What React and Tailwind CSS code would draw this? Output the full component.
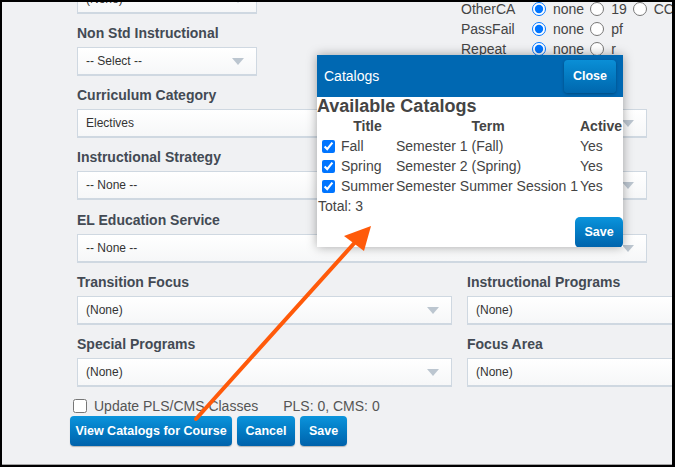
import React from "react";

function Arrow() {
  return (
    <svg width="12" height="7" viewBox="0 0 12 7" className="shrink-0">
      <polygon points="0,0 12,0 6,7" fill="#bcc6d0" />
    </svg>
  );
}

function Select({ value, w, arrow = true }) {
  return (
    <div
      className={`${w} h-[29px] shrink-0 flex items-center justify-between pl-[8px] pr-[12px] border border-[#cfd8e1] border-b-2 bg-gradient-to-b from-white to-[#f6f7f8] text-[12px] text-[#333]`}
    >
      <span>{value}</span>
      {arrow && <Arrow />}
    </div>
  );
}

function Label({ children, extra = "" }) {
  return (
    <div className={`mt-[9px] mb-[4px] h-[20px] flex items-center text-[14px] font-bold text-[#434a54] whitespace-nowrap ${extra}`}>
      {children}
    </div>
  );
}

function Radio({ checked }) {
  return (
    <input
      type="radio"
      readOnly
      checked={checked}
      className="w-[14px] h-[14px] m-0 block accent-[#0075ff]"
    />
  );
}

function BlueBtn({ children, cls }) {
  return (
    <div
      className={`${cls} h-[30px] flex items-center justify-center rounded-[4px] bg-gradient-to-b from-[#0b94dc] to-[#0062ab] text-white text-[12.5px] font-bold shadow-[0_1px_1px_rgba(0,0,0,0.25)]`}
    >
      {children}
    </div>
  );
}

export default function App() {
  const rows = [
    ["Fall", "Semester 1 (Fall)"],
    ["Spring", "Semester 2 (Spring)"],
    ["Summer", "Semester Summer Session 1"],
  ];
  return (
    <div
      className="relative w-[675px] h-[467px] overflow-hidden bg-black"
      style={{ fontFamily: '"Liberation Sans", Arial, sans-serif' }}
    >
      <div className="absolute left-[2px] top-[2px] right-[3px] bottom-[2px] bg-[#f0f1f3] border-b border-[#a3a3a3] overflow-hidden">
        <div className="pl-[75px]">
          {/* top section */}
          <div className="flex items-start">
            <div className="flex flex-col -mt-[17px]">
              <Select value="(None)" w="w-[180px]" />
              <Label>Non Std Instructional</Label>
              <Select value="-- Select --" w="w-[180px]" />
            </div>
            <div className="ml-[204px] -mt-[3px] flex flex-col text-[14px] text-[#444]">
              {[
                ["OtherCA", ["none", "19", "CC"]],
                ["PassFail", ["none", "pf"]],
                ["Repeat", ["none", "r"]],
              ].map(([name, opts]) => (
                <div key={name} className="h-[20px] flex items-center whitespace-nowrap">
                  <span className="w-[71px]">{name}</span>
                  {opts.map((o, i) => (
                    <span key={o} className="flex items-center">
                      <span className={i === 0 ? "" : "ml-[6px]"}>
                        <Radio checked={i === 0} />
                      </span>
                      <span className="ml-[7px]">{o}</span>
                    </span>
                  ))}
                </div>
              ))}
            </div>
          </div>

          <Label>Curriculum Category</Label>
          <Select value="Electives" w="w-[570px]" />
          <Label>Instructional Strategy</Label>
          <Select value="-- None --" w="w-[570px]" />
          <Label extra="!mt-[10px]">EL Education Service</Label>
          <Select value="-- None --" w="w-[570px]" />

          <div className="flex gap-[15px]">
            <div className="flex flex-col">
              <Label>Transition Focus</Label>
              <Select value="(None)" w="w-[375px]" />
              <Label>Special Programs</Label>
              <Select value="(None)" w="w-[375px]" />
            </div>
            <div className="flex flex-col">
              <Label>Instructional Programs</Label>
              <Select value="(None)" w="w-[375px]" arrow={false} />
              <Label>Focus Area</Label>
              <Select value="(None)" w="w-[375px]" arrow={false} />
            </div>
          </div>

          <div className="mt-[9px] h-[20px] flex items-center text-[14px] text-[#555] -ml-[4px]">
            <input type="checkbox" readOnly className="w-[14px] h-[14px] m-0" />
            <span className="ml-[7px]">Update PLS/CMS Classes</span>
            <span className="ml-[25px]">PLS: 0, CMS: 0</span>
          </div>
          <div className="flex gap-[5px] -ml-[7px]">
            <BlueBtn cls="w-[162px]">View Catalogs for Course</BlueBtn>
            <BlueBtn cls="w-[58px]">Cancel</BlueBtn>
            <BlueBtn cls="w-[47px]">Save</BlueBtn>
          </div>
        </div>
      </div>

      {/* Modal */}
      <div className="absolute left-[317px] top-[55px] w-[306px] h-[192px] overflow-hidden bg-white shadow-[0_0_10px_rgba(0,0,0,0.35)] flex flex-col">
        <div className="h-[42px] shrink-0 bg-[#0068b2] flex items-center justify-between pl-[7px] pr-[7px]">
          <span className="text-white text-[14px]">Catalogs</span>
          <div className="w-[52px] h-[33px] rounded-[4px] bg-gradient-to-b from-[#0b8fd6] to-[#0067ae] shadow-[0_1px_3px_rgba(0,0,0,0.3)] flex items-center justify-center text-white text-[12.5px] font-bold">
            Close
          </div>
        </div>
        <div className="shrink-0 h-[19px] text-[18px] font-bold text-[#444] leading-[19px] whitespace-nowrap">Available Catalogs</div>
        <div className="shrink-0 text-[14px] text-[#444] leading-[20px]">
          <div className="h-[20px] flex font-bold">
            <div className="w-[22px]"></div>
            <div className="w-[57px] text-center">Title</div>
            <div className="w-[184px] text-center">Term</div>
            <div>Active</div>
          </div>
          {rows.map(([t, term]) => (
            <div key={t} className="h-[20px] flex items-center whitespace-nowrap">
              <div className="w-[22px] pl-[5px]">
                <input type="checkbox" checked readOnly className="w-[13px] h-[13px] m-0 block accent-[#0075ff]" />
              </div>
              <div className="w-[57px] pl-[2px]">{t}</div>
              <div className="w-[184px]">{term}</div>
              <div>Yes</div>
            </div>
          ))}
        </div>
        <div className="shrink-0 h-[20px] text-[14px] text-[#444] leading-[20px] pl-[1px]">Total: 3</div>
        <div className="shrink-0 flex justify-end mt-[1px]">
          <div className="w-[48px] h-[31px] rounded-[5px] bg-gradient-to-b from-[#0b94dc] to-[#0062ab] flex items-center justify-center text-white text-[12.5px] font-bold">
            Save
          </div>
        </div>
      </div>

      {/* Orange arrow */}
      <svg className="absolute left-0 top-0 pointer-events-none" width="675" height="467">
        <line x1="196" y1="419" x2="358" y2="239" stroke="#ff5a0a" strokeWidth="4" strokeLinecap="round" />
        <polygon points="371,226 344,236 364,251" fill="#ff5a0a" />
      </svg>
    </div>
  );
}
